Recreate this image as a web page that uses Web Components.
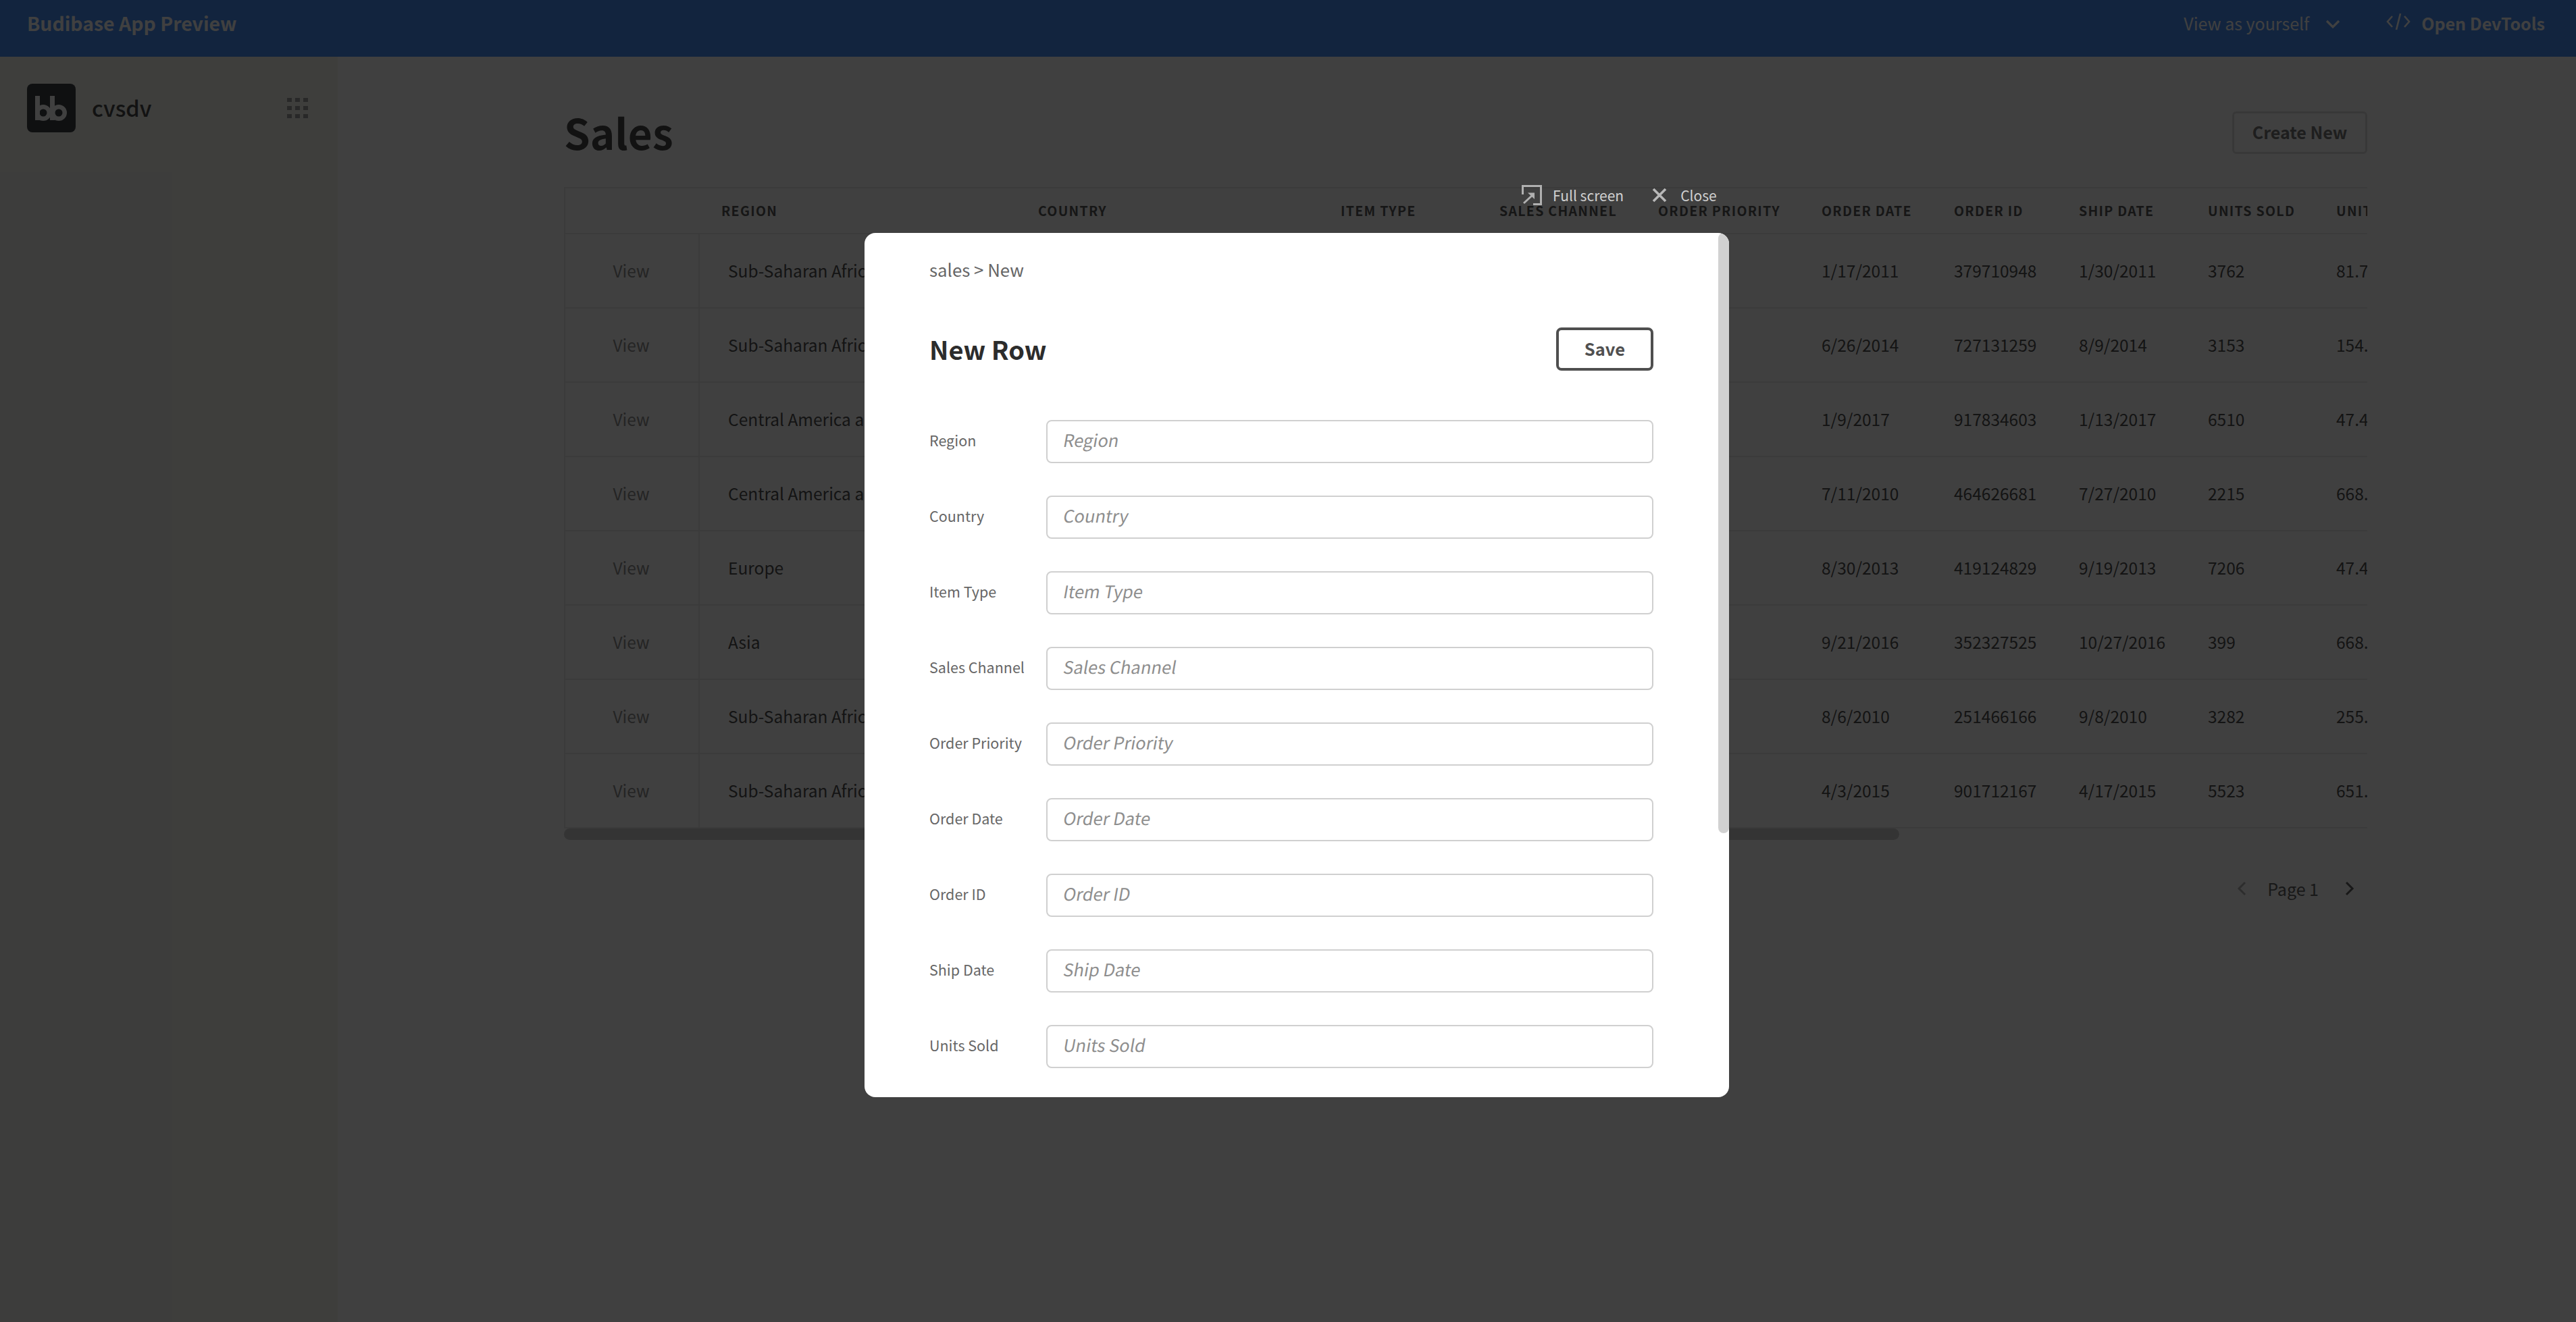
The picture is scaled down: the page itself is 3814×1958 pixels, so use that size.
<!DOCTYPE html>
<html lang="en">
<head>
<meta charset="utf-8">
<title>Budibase App Preview</title>
<style>
  html, body { margin: 0; height: 100%; overflow: hidden; background: #fff; }
  body { font-family: "Noto Sans CJK SC", "Source Sans Pro", "Noto Sans", sans-serif; }
</style>
</head>
<body>
<preview-shell>
  <preview-topbar slot="top"></preview-topbar>
  <app-sidebar slot="side" name="cvsdv"></app-sidebar>
  <sales-page slot="main"></sales-page>
  <row-modal slot="modal"></row-modal>
</preview-shell>

<script>
const shellTemplate = document.createElement("template");
shellTemplate.innerHTML = `
  <style>
    :host { display: flex; flex-direction: column; width: 100%; height: 100vh; position: relative; overflow: hidden; }
    .body { flex: 1; display: flex; min-height: 0; }
    .overlay { position: absolute; inset: 0; background: rgba(0,0,0,.75); }
  </style>
  <slot name="top"></slot>
  <div class="body">
    <slot name="side"></slot>
    <slot name="main"></slot>
  </div>
  <div class="overlay"></div>
  <slot name="modal"></slot>
`;
class PreviewShell extends HTMLElement {
  constructor() {
    super();
    this.attachShadow({ mode: "open" }).appendChild(shellTemplate.content.cloneNode(true));
  }
}

const topbarTemplate = document.createElement("template");
topbarTemplate.innerHTML = `
  <style>
    :host { display: flex; align-items: center; flex: 0 0 84px; height: 84px; box-sizing: border-box; padding: 0 46px 16px 40px; background: #4890f8; color: #fff; font-size: 25px; }
    .title { font-size: 28.4px; font-weight: 700; line-height: 32px; flex: 1; }
    .role { display: flex; align-items: center; gap: 24px; font-weight: 400; margin-right: 68px; line-height: 32px; }
    .dev { display: flex; align-items: center; gap: 16px; font-weight: 700; line-height: 32px; }
    svg { display: block; fill: none; stroke: #fff; }
    .role svg { position: relative; top: 2px; }
    .dev svg { position: relative; top: -2px; }
  </style>
  <div class="title">Budibase App Preview</div>
  <div class="role">
    <span>View as yourself</span>
    <svg width="22" height="14" viewBox="0 0 22 14" stroke-width="3.2"><path d="M2 2l9 9 9-9"/></svg>
  </div>
  <div class="dev">
    <svg width="36" height="26" viewBox="0 0 36 26" stroke-width="2.6"><path d="M9 5L2 13l7 8M27 5l7 8-7 8M21 1l-6 24"/></svg>
    <span>Open DevTools</span>
  </div>
`;
class PreviewTopbar extends HTMLElement {
  constructor() {
    super();
    this.attachShadow({ mode: "open" }).appendChild(topbarTemplate.content.cloneNode(true));
  }
}

const sidebarTemplate = document.createElement("template");
sidebarTemplate.innerHTML = `
  <style>
    :host { display: block; flex: 0 0 500px; box-sizing: border-box; padding: 40px 44px 0 40px; background: #f5f5f0; }
    .head { display: flex; align-items: center; gap: 24px; }
    .logo { width: 72px; height: 72px; display: block; flex: none; }
    .name { flex: 1; font-size: 32.5px; font-weight: 500; line-height: 40px; color: #4a4a4a; padding-bottom: 2px; }
    .apps { display: grid; grid-template-columns: repeat(3, 7px); grid-auto-rows: 6px; column-gap: 5px; row-gap: 6px; }
    .apps i { background: #a0a0a0; }
  </style>
  <div class="head">
    <svg class="logo" viewBox="0 0 72 72">
      <rect width="72" height="72" rx="8" fill="#3c4046"/>
      <g fill="none" stroke="#fff" stroke-width="6.5">
        <circle cx="24" cy="43" r="8.75"/>
        <circle cx="47" cy="43" r="8.75"/>
      </g>
      <path d="M12 18h7v36h-7zM34 18h7v36h-7z" fill="#fff"/>
    </svg>
    <div class="name"></div>
    <div class="apps"><i></i><i></i><i></i><i></i><i></i><i></i><i></i><i></i><i></i></div>
  </div>
`;
class AppSidebar extends HTMLElement {
  constructor() {
    super();
    this.attachShadow({ mode: "open" }).appendChild(sidebarTemplate.content.cloneNode(true));
  }
  connectedCallback() {
    this.shadowRoot.querySelector(".name").textContent = this.getAttribute("name");
  }
}

const COLUMNS = ["", "Region", "Country", "Item Type", "Sales Channel", "Order Priority", "Order Date", "Order ID", "Ship Date", "Units Sold", "Unit Price"];
const ROWS = [
  ["Sub-Saharan Africa", "1/17/2011", "379710948", "1/30/2011", "3762", "81.73"],
  ["Sub-Saharan Africa", "6/26/2014", "727131259", "8/9/2014", "3153", "154.06"],
  ["Central America and the Caribbean", "1/9/2017", "917834603", "1/13/2017", "6510", "47.45"],
  ["Central America and the Caribbean", "7/11/2010", "464626681", "7/27/2010", "2215", "668.27"],
  ["Europe", "8/30/2013", "419124829", "9/19/2013", "7206", "47.45"],
  ["Asia", "9/21/2016", "352327525", "10/27/2016", "399", "668.27"],
  ["Sub-Saharan Africa", "8/6/2010", "251466166", "9/8/2010", "3282", "255.28"],
  ["Sub-Saharan Africa", "4/3/2015", "901712167", "4/17/2015", "5523", "651.21"]
];

const tableTemplate = document.createElement("template");
tableTemplate.innerHTML = `
  <style>
    :host { display: block; position: relative; width: 2670px; height: 967px; overflow: hidden; --cols: 201px 469px 448px 235px 235px 242px 196px 185px 191px 190px 300px; }
    .row { display: grid; grid-template-columns: var(--cols); width: 2892px; box-sizing: border-box; align-items: center; border-bottom: 2px solid #ececec; }
    .head { height: 70px; border-top: 2px solid #ececec; font-size: 19.5px; font-weight: 700; letter-spacing: 1.3px; color: #5a5a5a; text-transform: uppercase; }
    .body { height: 110px; font-size: 24.5px; color: #505050; }
    .cell { padding-left: 32px; white-space: nowrap; overflow: hidden; line-height: 36px; min-height: 36px; }
    .view { height: 108px; line-height: 108px; padding: 0; text-align: center; color: #909090; border-right: 2px solid #ececec; box-sizing: border-box; }
    .region { padding-left: 42px; }
    .edge { position: absolute; left: 0; top: 0; width: 2px; height: 950px; background: #ececec; }
    .scroll { width: 1977px; height: 17px; background: #cfcfcf; border-radius: 9px; }
  </style>
  <div class="edge"></div>
  <div class="rows"></div>
  <div class="scroll"></div>
`;
class SalesTable extends HTMLElement {
  constructor() {
    super();
    this.attachShadow({ mode: "open" }).appendChild(tableTemplate.content.cloneNode(true));
  }
  connectedCallback() {
    const host = this.shadowRoot.querySelector(".rows");
    const head = document.createElement("div");
    head.className = "row head";
    COLUMNS.forEach(c => {
      const cell = document.createElement("div");
      cell.className = "cell";
      cell.textContent = c;
      head.appendChild(cell);
    });
    host.appendChild(head);
    ROWS.forEach(r => {
      const row = document.createElement("div");
      row.className = "row body";
      const cells = [["view", "View"], ["region", r[0]], ["", ""], ["", ""], ["", ""], ["", ""],
        ["", r[1]], ["", r[2]], ["", r[3]], ["", r[4]], ["", r[5]]];
      cells.forEach(([cls, text]) => {
        const cell = document.createElement("div");
        cell.className = "cell " + cls;
        cell.textContent = text;
        row.appendChild(cell);
      });
      host.appendChild(row);
    });
  }
}

const pagerTemplate = document.createElement("template");
pagerTemplate.innerHTML = `
  <style>
    :host { display: flex; justify-content: flex-end; align-items: center; gap: 24px; font-size: 25px; color: #606060; padding-right: 19px; line-height: 36px; }
    svg { display: block; fill: none; stroke-width: 3; }
    .prev { stroke: #b4b4b4; margin-right: 7px; }
    .next { stroke: #606060; margin-left: 15px; }
  </style>
  <svg class="prev" width="14" height="22" viewBox="0 0 14 22"><path d="M12 2l-9 9 9 9"/></svg>
  <span>Page 1</span>
  <svg class="next" width="14" height="22" viewBox="0 0 14 22"><path d="M2 2l9 9-9 9"/></svg>
`;
class TablePager extends HTMLElement {
  constructor() {
    super();
    this.attachShadow({ mode: "open" }).appendChild(pagerTemplate.content.cloneNode(true));
  }
}

const pageTemplate = document.createElement("template");
pageTemplate.innerHTML = `
  <style>
    :host { display: block; flex: 1; min-width: 0; box-sizing: border-box; padding: 0 309px 0 335px; background: #fff; }
    .bar { display: flex; align-items: center; justify-content: space-between; height: 193px; box-sizing: border-box; padding-top: 32px; }
    h1 { margin: 0 0 3px; font-size: 62px; font-weight: 600; line-height: 80px; color: #4a4a4a; }
    .create { box-sizing: border-box; width: 200px; height: 63px; border: 3px solid #e0e0e0; border-radius: 6px; display: flex; align-items: center; justify-content: center; font-size: 25px; font-weight: 700; color: #777; padding-bottom: 3px; }
    table-pager { margin-top: 54px; }
  </style>
  <div class="bar">
    <h1>Sales</h1>
    <div class="create">Create New</div>
  </div>
  <sales-table></sales-table>
  <table-pager></table-pager>
`;
class SalesPage extends HTMLElement {
  constructor() {
    super();
    this.attachShadow({ mode: "open" }).appendChild(pageTemplate.content.cloneNode(true));
  }
}

const fieldTemplate = document.createElement("template");
fieldTemplate.innerHTML = `
  <style>
    :host { display: grid; grid-template-columns: 173px 1fr; align-items: center; height: 64px; font-size: 21.5px; color: #666; }
    .box { box-sizing: border-box; height: 64px; border: 2px solid #d0d0d0; border-radius: 8px; padding: 0 24px 7px; display: flex; align-items: center; font-size: 25.5px; color: #8e8e8e; }
    .box span { transform: skewX(-10deg); transform-origin: left center; display: inline-block; }
    label { position: relative; top: -3px; }
  </style>
  <label></label>
  <div class="box" role="textbox"><span></span></div>
`;
class FormField extends HTMLElement {
  constructor() {
    super();
    this.attachShadow({ mode: "open" }).appendChild(fieldTemplate.content.cloneNode(true));
  }
  connectedCallback() {
    const name = this.getAttribute("name");
    this.shadowRoot.querySelector("label").textContent = name;
    this.shadowRoot.querySelector(".box span").textContent = name;
  }
}

const modalTemplate = document.createElement("template");
modalTemplate.innerHTML = `
  <style>
    :host { position: absolute; left: 1280px; top: 345px; width: 1280px; height: 1280px; display: block; }
    .actions { position: absolute; left: 973px; top: -71px; display: flex; align-items: center; color: #d0d0d0; font-size: 21px; line-height: 30px; white-space: nowrap; }
    .actions svg { display: block; fill: none; }
    .actions .act { display: flex; align-items: center; gap: 16px; }
    .actions .act + .act { margin-left: 42px; gap: 20px; }
    .panel { box-sizing: border-box; width: 100%; height: 100%; background: #fff; border-radius: 16px; overflow: hidden; position: relative; padding: 38px 112px 0 96px; }
    .crumbs { font-size: 25.8px; line-height: 32px; color: #666; }
    .head { display: flex; align-items: center; justify-content: space-between; margin-top: 70px; height: 64px; }
    .head h2 { margin: 0; font-size: 38px; font-weight: 700; line-height: 56px; color: #2c2c2c; }
    .save { box-sizing: border-box; width: 144px; height: 64px; border: 4px solid #4f4f4f; border-radius: 8px; display: flex; align-items: center; justify-content: center; font-size: 25.5px; font-weight: 700; color: #505050; padding-bottom: 3px; }
    .form { display: flex; flex-direction: column; gap: 48px; margin-top: 73px; }
    .thumb { position: absolute; right: 0; top: 0; width: 16px; height: 889px; border-radius: 8px; background: #d1d1d1; }
  </style>
  <div class="actions">
    <div class="act">
      <svg width="30" height="30" viewBox="0 0 30 30" stroke="#b0b0b0" stroke-width="3"><path d="M1.5 14V1.5h27v27H17"/><path d="M3 27l13-12"/><path d="M9 11.5h10V21z" fill="#b0b0b0" stroke="none"/></svg>
      <span>Full screen</span>
    </div>
    <div class="act">
      <svg width="22" height="22" viewBox="0 0 22 22" stroke="#b8b8b8" stroke-width="3.6"><path d="M2 2l18 18M20 2L2 20"/></svg>
      <span>Close</span>
    </div>
  </div>
  <div class="panel">
    <div class="crumbs">sales &gt; New</div>
    <div class="head">
      <h2>New Row</h2>
      <div class="save">Save</div>
    </div>
    <div class="form">
      <form-field name="Region"></form-field>
      <form-field name="Country"></form-field>
      <form-field name="Item Type"></form-field>
      <form-field name="Sales Channel"></form-field>
      <form-field name="Order Priority"></form-field>
      <form-field name="Order Date"></form-field>
      <form-field name="Order ID"></form-field>
      <form-field name="Ship Date"></form-field>
      <form-field name="Units Sold"></form-field>
    </div>
    <div class="thumb"></div>
  </div>
`;
class RowModal extends HTMLElement {
  constructor() {
    super();
    this.attachShadow({ mode: "open" }).appendChild(modalTemplate.content.cloneNode(true));
  }
}

customElements.define("preview-topbar", PreviewTopbar);
customElements.define("app-sidebar", AppSidebar);
customElements.define("sales-table", SalesTable);
customElements.define("table-pager", TablePager);
customElements.define("sales-page", SalesPage);
customElements.define("form-field", FormField);
customElements.define("row-modal", RowModal);
customElements.define("preview-shell", PreviewShell);
</script>
</body>
</html>
